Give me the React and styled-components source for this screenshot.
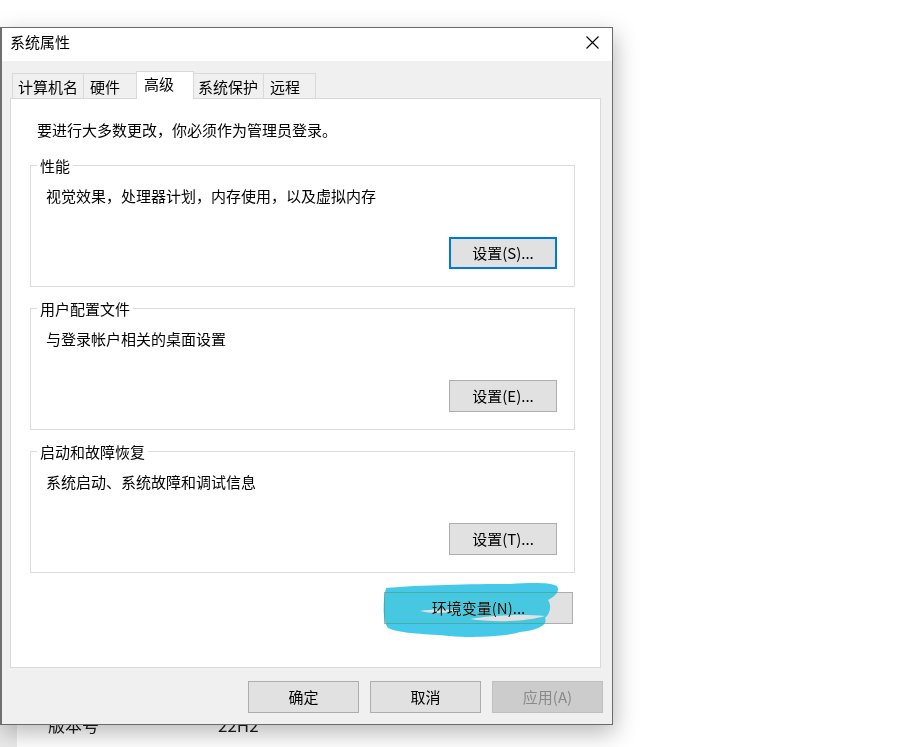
import React from "react";
import styled, { createGlobalStyle } from "styled-components";

const GlobalStyle = createGlobalStyle`
  html, body { margin: 0; padding: 0; background: #fff; }
  body { font-family: "Noto Sans CJK SC", "Noto Sans", sans-serif; }
  * { box-sizing: border-box; }
`;

const Desktop = styled.div`
  position: relative;
  width: 921px;
  height: 747px;
  overflow: hidden;
  background: #fff;
`;

const BgWindow = styled.div`
  display: flex;
  margin-top: 27px;
  height: 720px;
`;

const Sidebar = styled.div`
  width: 17px;
  background: #ebebeb;
`;

const BgMain = styled.div`
  flex: 1;
  padding: 683px 0 0 31px;
  font-size: 17px;
  color: #1b1b1b;
`;

const SpecRow = styled.div`
  display: grid;
  grid-template-columns: 170px auto;
  height: 30px;
  line-height: 30px;
`;

const Dialog = styled.div`
  position: absolute;
  top: 27px;
  left: 0;
  width: 613px;
  height: 698px;
  border: 1px solid #6a6a6a;
  border-left: 2px solid #707070;
  background: #f0f0f0;
  box-shadow: 2px 8px 22px rgba(0, 0, 0, 0.28);
  display: flex;
  flex-direction: column;
  font-size: 15px;
  color: #000;
`;

const TitleBar = styled.div`
  height: 33px;
  background: #fff;
  display: flex;
  align-items: center;
  justify-content: space-between;
  padding: 0 0 5px 8px;
`;

const Title = styled.div`
  font-size: 15px;
  line-height: 18px;
`;

const CloseButton = styled.div`
  width: 40px;
  height: 18px;
  display: grid;
  place-items: center;
`;

const Body = styled.div`
  flex: 1;
  display: flex;
  flex-direction: column;
  padding: 10px 9px 11px 8px;
`;

const TabStrip = styled.div`
  display: flex;
  align-items: flex-end;
  height: 27px;
  padding-left: 2px;
  margin-right: 2px;
  position: relative;
  z-index: 1;
`;

const Tab = styled.div`
  width: ${(p) => p.$w}px;
  height: ${(p) => (p.$active ? "28px" : "25px")};
  padding: ${(p) => (p.$active ? "3px 0 0 7px" : `4px 0 0 ${p.$pl}px`)};
  margin: ${(p) => (p.$active ? "0 0 -1px -1px" : "0 0 0 -1px")};
  border: 1px solid #d9d9d9;
  border-bottom: none;
  background: ${(p) => (p.$active ? "#fff" : "#f0f0f0")};
  font-size: 15px;
  line-height: 18px;
  white-space: nowrap;
  position: relative;
  z-index: ${(p) => (p.$active ? 2 : 1)};
  &:first-child { margin-left: 0; }
`;

const Panel = styled.div`
  flex: 1;
  background: #fff;
  border: 1px solid #d9d9d9;
  margin-right: 2px;
  padding: 22px 25px 0 19px;
  display: flex;
  flex-direction: column;
`;

const Intro = styled.div`
  padding-left: 7px;
  line-height: 18px;
  margin-bottom: 26px;
`;

const Group = styled.div`
  position: relative;
  border: 1px solid #dcdcdc;
  padding: 21px 17px 17px 15px;
  display: flex;
  flex-direction: column;
  & + & { margin-top: 21px; }
`;

const Legend = styled.div`
  position: absolute;
  top: -9px;
  left: 6px;
  padding: 0 3px;
  background: #fff;
  line-height: 18px;
`;

const GroupText = styled.div`
  line-height: 18px;
  height: 18px;
  margin-bottom: 32px;
`;

const Button = styled.div`
  width: ${(p) => p.$w}px;
  height: 32px;
  display: flex;
  align-items: center;
  justify-content: center;
  font-size: 15px;
  line-height: 18px;
  background: ${(p) => (p.$disabled ? "#cccccc" : "#e1e1e1")};
  border: ${(p) =>
    p.$focused ? "2px solid #0078d7" : p.$disabled ? "1px solid #bfbfbf" : "1px solid #adadad"};
  color: ${(p) => (p.$disabled ? "#8a8a8a" : "#000")};
  align-self: ${(p) => (p.$end ? "flex-end" : "auto")};
`;

const EnvRow = styled.div`
  display: flex;
  justify-content: flex-end;
  margin-top: 19px;
  margin-right: 2px;
`;

const ButtonRow = styled.div`
  display: flex;
  justify-content: flex-end;
  gap: 11px;
  margin-top: 13px;
`;

const Scribble = styled.svg`
  position: absolute;
  left: 376px;
  top: 578px;
  width: 194px;
  height: 64px;
  mix-blend-mode: darken;
  pointer-events: none;
`;

const groups = [
  { legend: "性能", text: "视觉效果，处理器计划，内存使用，以及虚拟内存", btn: "设置(S)...", focused: true },
  { legend: "用户配置文件", text: "与登录帐户相关的桌面设置", btn: "设置(E)..." },
  { legend: "启动和故障恢复", text: "系统启动、系统故障和调试信息", btn: "设置(T)..." },
];

const tabs = [
  { label: "计算机名", w: 72, pl: 5 },
  { label: "硬件", w: 54, pl: 6 },
  { label: "高级", w: 58, pl: 7, active: true },
  { label: "系统保护", w: 71, pl: 4 },
  { label: "远程", w: 53, pl: 6 },
];

export default function App() {
  return (
    <Desktop>
      <GlobalStyle />
      <BgWindow>
        <Sidebar />
        <BgMain>
          <SpecRow>
            <span>版本号</span>
            <span>22H2</span>
          </SpecRow>
          <SpecRow>
            <span>安装日期</span>
            <span>2021/6/1</span>
          </SpecRow>
        </BgMain>
      </BgWindow>

      <Dialog>
        <TitleBar>
          <Title>系统属性</Title>
          <CloseButton>
            <svg width="13" height="13" viewBox="0 0 13 13">
              <path d="M0.5 0.5 L12.5 12.5 M12.5 0.5 L0.5 12.5" stroke="#000" strokeWidth="1.1" fill="none" />
            </svg>
          </CloseButton>
        </TitleBar>
        <Body>
          <TabStrip>
            {tabs.map((t) => (
              <Tab key={t.label} $w={t.w} $pl={t.pl} $active={t.active}>
                {t.label}
              </Tab>
            ))}
          </TabStrip>
          <Panel>
            <Intro>要进行大多数更改，你必须作为管理员登录。</Intro>
            {groups.map((g) => (
              <Group key={g.legend}>
                <Legend>{g.legend}</Legend>
                <GroupText>{g.text}</GroupText>
                <Button $w={108} $end $focused={g.focused}>
                  {g.btn}
                </Button>
              </Group>
            ))}
            <EnvRow>
              <Button $w={189}>环境变量(N)...</Button>
            </EnvRow>
          </Panel>
          <ButtonRow>
            <Button $w={111}>确定</Button>
            <Button $w={111}>取消</Button>
            <Button $w={111} $disabled>
              应用(A)
            </Button>
          </ButtonRow>
        </Body>
      </Dialog>

      <Scribble viewBox="376 578 194 64">
        <path
          fillRule="evenodd"
          d="M386,588 C420,585 470,584 510,584 C530,583 548,582 557,586 C560,591 556,596 548,600 C552,606 550,614 545,618 C548,624 540,630 520,632 C505,637 470,638 450,636 C430,634 400,634 388,628 C382,620 383,600 386,588 Z M420,611 C430,609 450,609 458,611 C450,613 430,614 420,611 Z M470,619 C490,615 525,614 545,616 C530,621 495,623 470,619 Z"
          fill="#46c8e8"
        />
      </Scribble>
    </Desktop>
  );
}
